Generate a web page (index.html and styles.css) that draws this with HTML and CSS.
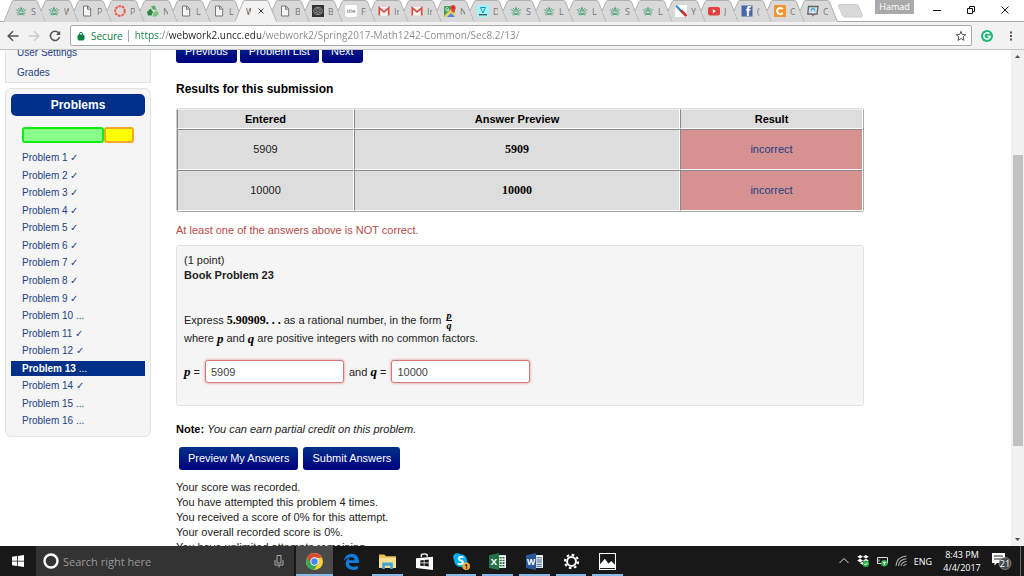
FILE: index.html
```html
<!DOCTYPE html>
<html lang="en">
	<head>
		<meta charset="UTF-8">
		<title>WeBWorK : Sec8.2 : 13</title>
		<link rel="stylesheet" href="styles.css">
	</head>
	<body>
		<svg class="defs" aria-hidden="true">
			<symbol id="tab" viewBox="0 0 43 22">
				<path class="tab-fill" d="M9 22L4 11L8 2Q8.500 .5 10 .5H31Q33 .5 33.500 2L42 22Z"/>
				<path class="tab-line" d="M4 11L8 2Q8.500 .5 10 .5H31Q33 .5 33.500 2L40.500 20Q41 21.500 43 21.500"/>
			</symbol>
			<symbol id="tab-full" viewBox="0 0 43 22">
				<path class="tab-fill" d="M0 22L8 2Q8.500 .5 10 .5H31Q33 .5 33.500 2L42 22Z"/>
				<path class="tab-line" d="M0 21.500L8 2Q8.500 .5 10 .5H31Q33 .5 33.500 2L41.500 21.500"/>
			</symbol>
			<symbol id="crown" viewBox="0 0 12 12">
				<path d="M6 1.500L7 3.500L6 7L5 3.500Z" fill="#4a9f75"/>
				<path d="M3 3Q4.800 4.500 5.200 7M9 3Q7.200 4.500 6.800 7M.8 4.800Q3.200 4.800 4.400 7.400M11.200 4.800Q8.800 4.800 7.600 7.400M1.500 8Q3 7.500 4.500 8.500H7.500Q9 7.500 10.500 8M2.500 10Q6 8.800 9.500 10" fill="none" stroke="#4a9f75" stroke-width=".9"/>
			</symbol>
			<symbol id="doc" viewBox="0 0 12 12">
				<path d="M2.500 1H7L9.700 3.700V11H2.500ZM6.500 1V4.200H9.700" fill="#f4f4f4" stroke="#777" stroke-width="1"/>
			</symbol>
			<symbol id="ring" viewBox="0 0 12 12">
				<circle cx="6" cy="6" r="4.800" fill="none" stroke="#ee5a4f" stroke-width="2" stroke-dasharray="2.600 .8"/>
			</symbol>
			<symbol id="leaf" viewBox="0 0 12 12">
				<path d="M4 1L8 .8L9.500 5L6 4.500Z" fill="#56b35d"/>
				<path d="M0 7L3.500 3.500L6 7L4.500 10.500H1Z" fill="#2b8a3e"/>
				<path d="M6.500 7.500L10 5.500L12 9L9 11.500H5.500Z" fill="#7cc47f"/>
			</symbol>
			<symbol id="coil" viewBox="0 0 12 12">
				<rect width="12" height="12" fill="#333"/>
				<g fill="none" stroke="#aaa" stroke-width=".8"><ellipse cx="6" cy="6" rx="4.300" ry="3.600"/><ellipse cx="6" cy="5" rx="2.500" ry="1.300"/><path d="M2.500 7Q6 9.500 9.500 7"/></g>
			</symbol>
			<symbol id="gmail" viewBox="0 0 12 12">
				<rect x=".5" y="2" width="11" height="8.500" fill="#f5f5f5"/>
				<path d="M1.300 10.500V2.800L6 6.800L10.700 2.800V10.500" fill="none" stroke="#dc4b3e" stroke-width="1.700"/>
			</symbol>
			<symbol id="maps" viewBox="0 0 12 12">
				<rect y="1" width="11" height="11" rx="1" fill="#3f9f57"/>
				<path d="M0 11L7 4L11 8V12H1Z" fill="#f0d060"/>
				<path d="M3 12L7 8L11 12Z" fill="#4e86ea"/>
				<path d="M9 8Q6 4.500 6.300 2.700A2.700 2.700 0 0 1 11.700 2.700Q12 4.500 9 8Z" fill="#e2483d"/>
				<circle cx="9" cy="2.800" r="1" fill="#8c2b22"/>
				<path d="M4.500 3.300A1.600 1.600 0 1 0 4.800 4.500H3.300" fill="none" stroke="#fff" stroke-width=".8"/>
			</symbol>
			<symbol id="funnel" viewBox="0 0 12 12">
				<rect width="12" height="12" fill="#9ff6fa"/>
				<path d="M3.500 2.500H8.500L6 8Z" fill="none" stroke="#2a93a8"/>
				<path d="M2 9.800H10" stroke="#222"/>
			</symbol>
			<symbol id="pens" viewBox="0 0 12 12">
				<rect width="12" height="12" fill="#fff"/>
				<path d="M1 .5L6 6" stroke="#3a8cc9" stroke-width="2.200"/>
				<path d="M6 5.500L11.500 11" stroke="#ce3434" stroke-width="2.800"/>
				<path d="M5 4.500L7.500 7" stroke="#333" stroke-width="1"/>
			</symbol>
			<symbol id="youtube" viewBox="0 0 12 12">
				<rect y="2" width="12" height="8.500" rx="2" fill="#e0413f"/>
				<path d="M4.800 4.200L8 6.200L4.800 8.200Z" fill="#fff"/>
			</symbol>
			<symbol id="chegg" viewBox="0 0 12 12">
				<rect width="12" height="12" rx="1" fill="#f7932e"/>
				<path d="M8.700 4.200A3.100 3.100 0 1 0 8.700 7.900" fill="none" stroke="#fff" stroke-width="2"/>
			</symbol>
			<symbol id="desk" viewBox="0 0 12 12">
				<path d="M1.500 1.500H11L10 9H7L6 10.500L5 9H.8Z" fill="#cfe1ea" stroke="#666" stroke-width="1.300"/>
				<circle cx="6" cy="5" r="2.300" fill="#62aed0"/>
				<path d="M4.500 8L6 5L7.500 8" stroke="#fff" fill="none"/>
			</symbol>
		</svg>

		<header class="browser">
			<div class="titlebar">
				<nav class="tabs" aria-label="Tabs">
					<button class="tab"><svg class="shape"><use href="#tab-full"/></svg><svg class="fav"><use href="#crown"/></svg><span>S</span></button>
					<button class="tab"><svg class="shape"><use href="#tab"/></svg><svg class="fav"><use href="#crown"/></svg><span>W</span></button>
					<button class="tab"><svg class="shape"><use href="#tab"/></svg><svg class="fav"><use href="#doc"/></svg><span>P</span></button>
					<button class="tab"><svg class="shape"><use href="#tab"/></svg><svg class="fav"><use href="#ring"/></svg><span>P</span></button>
					<button class="tab"><svg class="shape"><use href="#tab"/></svg><svg class="fav"><use href="#leaf"/></svg><span>N</span></button>
					<button class="tab"><svg class="shape"><use href="#tab"/></svg><svg class="fav"><use href="#doc"/></svg><span>L</span></button>
					<button class="tab"><svg class="shape"><use href="#tab"/></svg><svg class="fav"><use href="#doc"/></svg><span>L</span></button>
					<button class="tab active"><svg class="shape"><use href="#tab-full"/></svg><span>W</span><svg class="close" viewBox="0 0 8 8"><path d="M1.500 1.500L6.500 6.500M6.500 1.500L1.500 6.500"/></svg></button>
					<button class="tab"><svg class="shape"><use href="#tab"/></svg><svg class="fav"><use href="#doc"/></svg><span>B</span></button>
					<button class="tab"><svg class="shape"><use href="#tab"/></svg><svg class="fav"><use href="#coil"/></svg><span>B</span></button>
					<button class="tab"><svg class="shape"><use href="#tab"/></svg><svg class="fav" viewBox="0 0 12 12"><rect width="12" height="12" rx="2" fill="#fff"/><text x="6" y="8" font-size="6" text-anchor="middle" fill="#555" stroke="none">tile</text></svg><span>F</span></button>
					<button class="tab"><svg class="shape"><use href="#tab"/></svg><svg class="fav"><use href="#gmail"/></svg><span>In</span></button>
					<button class="tab"><svg class="shape"><use href="#tab"/></svg><svg class="fav"><use href="#gmail"/></svg><span>In</span></button>
					<button class="tab"><svg class="shape"><use href="#tab"/></svg><svg class="fav"><use href="#maps"/></svg><span>N</span></button>
					<button class="tab"><svg class="shape"><use href="#tab"/></svg><svg class="fav"><use href="#funnel"/></svg><span>D</span></button>
					<button class="tab"><svg class="shape"><use href="#tab"/></svg><svg class="fav"><use href="#crown"/></svg><span>S</span></button>
					<button class="tab"><svg class="shape"><use href="#tab"/></svg><svg class="fav"><use href="#crown"/></svg><span>L</span></button>
					<button class="tab"><svg class="shape"><use href="#tab"/></svg><svg class="fav"><use href="#crown"/></svg><span>L</span></button>
					<button class="tab"><svg class="shape"><use href="#tab"/></svg><svg class="fav"><use href="#crown"/></svg><span>S</span></button>
					<button class="tab"><svg class="shape"><use href="#tab"/></svg><svg class="fav"><use href="#crown"/></svg><span>L</span></button>
					<button class="tab"><svg class="shape"><use href="#tab"/></svg><svg class="fav"><use href="#pens"/></svg><span>Y</span></button>
					<button class="tab"><svg class="shape"><use href="#tab"/></svg><svg class="fav"><use href="#youtube"/></svg><span>J</span></button>
					<button class="tab"><svg class="shape"><use href="#tab"/></svg><svg class="fav" viewBox="0 0 12 12"><rect x=".5" y=".5" width="11" height="11" fill="#4a66a5"/><text x="7" y="11" font-size="12" font-weight="bold" text-anchor="middle" fill="#fff">f</text></svg><span>(</span></button>
					<button class="tab"><svg class="shape"><use href="#tab"/></svg><svg class="fav"><use href="#chegg"/></svg><span>C</span></button>
					<button class="tab"><svg class="shape"><use href="#tab"/></svg><svg class="fav"><use href="#desk"/></svg><span>C</span></button>
					<button class="newtab" aria-label="New tab"><svg viewBox="0 0 28 14"><path d="M3 .5H19.500Q21 .5 21.500 2L25.500 11.500Q26 13 24.500 13H8Q6.500 13 6 12L1.500 2Q1 .5 3 .5Z"/></svg></button>
				</nav>
				<button class="user">Hamad</button>
				<div class="winbtns">
					<button aria-label="Minimize"><svg viewBox="0 0 10 10"><path d="M1 5.500H9"/></svg></button>
					<button aria-label="Restore"><svg viewBox="0 0 10 10"><path d="M1.500 3.500H6.500V8.500H1.500ZM3.500 3V1.500H8.500V6.500H7"/></svg></button>
					<button aria-label="Close"><svg viewBox="0 0 10 10"><path d="M1.500 1.500L8.500 8.500M8.500 1.500L1.500 8.500"/></svg></button>
				</div>
			</div>
			<div class="toolbar">
				<button aria-label="Back"><svg viewBox="0 0 12 12"><path d="M11.500 6H1.500M6 1.200L1.200 6L6 10.800"/></svg></button>
				<button class="off" aria-label="Forward"><svg viewBox="0 0 12 12"><path d="M.5 6H10.500M6 1.200L10.800 6L6 10.800"/></svg></button>
				<button aria-label="Reload"><svg viewBox="0 0 12 12"><path d="M9.600 3A4.600 4.600 0 1 0 10.500 7"/><path class="solid" d="M11.200 .8V5H7Z"/></svg></button>
				<div class="address">
					<svg class="lock" viewBox="0 0 8 10"><rect x="1" y="4" width="6" height="5" rx="1"/><path d="M2.500 4V2.800A1.500 1.500 0 0 1 5.500 2.800V4"/></svg>
					<label for="url">Secure</label>
					<input id="url" type="text" value="https://webwork2.uncc.edu/webwork2/Spring2017-Math1242-Common/Sec8.2/13/">
					<button aria-label="Bookmark"><svg viewBox="0 0 12 12"><path class="star" d="M6 1.300L7.300 4.500L10.800 4.700L8.100 6.900L9 10.400L6 8.500L3 10.400L3.900 6.900L1.200 4.700L4.700 4.500Z"/></svg></button>
				</div>
				<button aria-label="Grammarly"><svg viewBox="0 0 12 12"><circle cx="6" cy="6" r="6" fill="#1fb677" stroke="none"/><path class="white" d="M8.500 3.800A3.200 3.200 0 1 0 9.200 6.300H6.500"/></svg></button>
				<button aria-label="Menu"><svg viewBox="0 0 12 12"><path class="solid" d="M5 1.500h2v2H5zM5 5h2v2H5zM5 8.500h2v2H5z"/></svg></button>
			</div>
		</header>

		<div class="viewport">
			<div class="page">
				<aside class="side">
					<div class="panel account">
						<a href="#">User Settings</a>
						<a href="#">Grades</a>
					</div>
					<div class="panel problems">
						<h2>Problems</h2>
						<div class="progress"><span class="done"></span><span class="open"></span></div>
						<ul>
							<li><a href="#">Problem 1 ✓</a></li>
							<li><a href="#">Problem 2 ✓</a></li>
							<li><a href="#">Problem 3 ✓</a></li>
							<li><a href="#">Problem 4 ✓</a></li>
							<li><a href="#">Problem 5 ✓</a></li>
							<li><a href="#">Problem 6 ✓</a></li>
							<li><a href="#">Problem 7 ✓</a></li>
							<li><a href="#">Problem 8 ✓</a></li>
							<li><a href="#">Problem 9 ✓</a></li>
							<li><a href="#">Problem 10 ...</a></li>
							<li><a href="#">Problem 11 ✓</a></li>
							<li><a href="#">Problem 12 ✓</a></li>
							<li class="current"><a href="#"><b>Problem 13</b> ...</a></li>
							<li><a href="#">Problem 14 ✓</a></li>
							<li><a href="#">Problem 15 ...</a></li>
							<li><a href="#">Problem 16 ...</a></li>
						</ul>
					</div>
				</aside>
				<main class="main">
					<div class="nav">
						<a class="btn" href="#">Previous</a>
						<a class="btn" href="#">Problem List</a>
						<a class="btn" href="#">Next</a>
					</div>
					<h3>Results for this submission</h3>
					<table class="results">
						<tr><th class="entered">Entered</th><th>Answer Preview</th><th class="result">Result</th></tr>
						<tr><td>5909</td><td class="math">5909</td><td class="wrong"><a href="#">incorrect</a></td></tr>
						<tr><td>10000</td><td class="math">10000</td><td class="wrong"><a href="#">incorrect</a></td></tr>
					</table>
					<p class="error">At least one of the answers above is NOT correct.</p>
					<form>
						<div class="problem">
							<p>(1 point)<br><b>Book Problem 23</b></p>
							<div class="statement">
								<p>Express <span class="math">5.90909. . .</span> as a rational number, in the form <span class="frac"><i>p</i><i>q</i></span></p>
								<p>where <i class="math">p</i> and <i class="math">q</i> are positive integers with no common factors.</p>
							</div>
							<div class="answers">
								<label for="p"><i class="math">p</i> =</label>
								<input id="p" type="text" value="5909">
								<label for="q">and <i class="math">q</i> =</label>
								<input id="q" type="text" value="10000">
							</div>
						</div>
						<p class="note"><b>Note:</b> <em>You can earn partial credit on this problem.</em></p>
						<div class="submit">
							<button type="button" class="btn">Preview My Answers</button>
							<button type="button" class="btn">Submit Answers</button>
						</div>
					</form>
					<p class="score">Your score was recorded.<br>You have attempted this problem 4 times.<br>You received a score of 0% for this attempt.<br>Your overall recorded score is 0%.<br>You have unlimited attempts remaining.</p>
				</main>
			</div>
			<div class="scrollbar">
				<svg viewBox="0 0 13 13"><path d="M4 8L6.500 5L9 8Z"/></svg>
				<div class="track"><div class="thumb"></div></div>
				<svg viewBox="0 0 13 13"><path d="M4 5L6.500 8L9 5Z"/></svg>
			</div>
		</div>

		<footer class="taskbar">
			<button class="start" aria-label="Start"><svg viewBox="0 0 12 12"><path d="M0 1.800L5 1V5.700H0ZM5.800 .9L12 0V5.700H5.800ZM0 6.400H5V11L0 10.300ZM5.800 6.400H12V12L5.800 11.100Z" fill="#fff"/></svg></button>
			<div class="search">
				<svg viewBox="0 0 16 16"><circle cx="8" cy="8" r="6.500" fill="none" stroke="#fff" stroke-width="2.400"/></svg>
				<input type="text" placeholder="Search right here" aria-label="Search">
				<svg class="mic" viewBox="0 0 12 14"><path d="M4 1.500H8V9H4ZM2 6V11H10V6M6 11V13.500" fill="none" stroke="#aaa"/></svg>
			</div>
			<div class="apps">
				<button class="app running focus" aria-label="Chrome"><svg viewBox="0 0 16 16"><circle cx="8" cy="8" r="8" fill="#f9cf3a"/><path d="M8 8L1.100 4A8 8 0 0 0 7.500 16L11.500 10Z" fill="#36a853"/><path d="M1.100 4A8 8 0 0 1 14.900 4.400H8L4.600 10Z" fill="#dc4437"/><circle cx="8" cy="8" r="3.900" fill="#fff"/><circle cx="8" cy="8" r="3" fill="#4285f4"/></svg></button>
				<button class="app" aria-label="Edge"><svg viewBox="0 0 16 16"><path d="M1 7Q2 .8 8.300 .7Q14.800 1 15 8V9.500H5.500Q6 13 10 13Q12.300 13 14 12V15Q12 16 9 16Q2.500 15.600 2.500 9.500Q3 5.800 6.500 4.500Q5.500 5.500 5.500 6.800H10.800Q10.700 3.900 7.800 3.900Q3.500 4 1 7Z" fill="#0f7bdb"/></svg></button>
				<button class="app running" aria-label="File Explorer"><svg viewBox="0 0 16 16"><path d="M0 1.500H5L6.500 3H16V14H0Z" fill="#e9bd51"/><path d="M0 4.500H16V14H0Z" fill="#fbe18f"/><path d="M3 15V9H13V15H10.500V12H5.500V15Z" fill="#3fa4dc"/></svg></button>
				<button class="app" aria-label="Store"><svg viewBox="0 0 16 16"><path d="M0 5L16 3.500V16L0 14Z" fill="#fff"/><path d="M5 4V1.500Q8 0 10.500 1.500V3.500" fill="none" stroke="#fff" stroke-width="1.200"/><path d="M4 7L7.300 6.700V9H4ZM8 6.600L12 6.200V9H8ZM4 9.700H7.300V12.200L4 11.900ZM8 9.700H12V12.600L8 12.200Z" fill="#181818"/></svg></button>
				<button class="app running" aria-label="Skype"><svg viewBox="0 0 18 18"><circle cx="8" cy="8" r="6.800" fill="#00aff0"/><circle cx="4.500" cy="4.500" r="4.200" fill="#00aff0"/><circle cx="11.500" cy="11.500" r="4.200" fill="#00aff0"/><text x="8" y="12.500" font-size="13" font-weight="bold" text-anchor="middle" fill="#fff">S</text><circle cx="14" cy="14" r="4" fill="#fbb034"/><text x="14" y="16.500" font-size="7" font-weight="bold" text-anchor="middle" fill="#222">1</text></svg></button>
				<button class="app running" aria-label="Excel"><svg viewBox="0 0 16 16"><rect x="8" y="2" width="8" height="12" fill="#fff"/><path d="M10 4.500H15M10 7H15M10 9.500H15M10 12H15" stroke="#217346" stroke-width="1.500" stroke-dasharray="2 .6"/><path d="M0 2L9.500 0V16L0 14Z" fill="#217346"/><text x="4.700" y="11.500" font-size="9" font-weight="bold" text-anchor="middle" fill="#fff">X</text></svg></button>
				<button class="app running" aria-label="Word"><svg viewBox="0 0 16 16"><rect x="8" y="2" width="8" height="12" fill="#fff"/><path d="M10 4.500H15M10 6.500H15M10 8.500H15M10 10.500H15M10 12.500H15" stroke="#2b579a"/><path d="M0 2L9.500 0V16L0 14Z" fill="#2b579a"/><text x="4.700" y="11" font-size="8" font-weight="bold" text-anchor="middle" fill="#fff">W</text></svg></button>
				<button class="app running" aria-label="Settings"><svg viewBox="0 0 16 16"><circle cx="8" cy="8" r="4.200" fill="none" stroke="#fff" stroke-width="1.900"/><circle cx="8" cy="8" r="6.200" fill="none" stroke="#fff" stroke-width="2" stroke-dasharray="2.435 2.435"/></svg></button>
				<button class="app running" aria-label="Photos"><svg viewBox="0 0 16 16"><path d="M.5 .5H15.500V15.500H.5Z" fill="#181818" stroke="#fff"/><path d="M1 14V10.500L5.500 5.500L9 10L11.500 7.500L15 11V14Z" fill="#fff"/></svg></button>
			</div>
			<div class="tray">
				<svg viewBox="0 0 12 12"><path d="M1.500 8L6 3.500L10.500 8" fill="none" stroke="#ddd"/></svg>
				<svg viewBox="0 0 12 12"><path d="M3.300 0L6 1.800L3 3.600L.2 1.800ZM8.700 0L11.800 1.800L9 3.600L6 1.800ZM3 3.800L6 5.600L3.300 7.400L.2 5.600ZM9 3.800L11.800 5.600L8.700 7.400L6 5.600ZM3 8.200L6 6.500L8 8L6 10Z" fill="#fff"/><circle cx="8.800" cy="8.800" r="3.200" fill="#2fb14a"/><path d="M7.300 8.800L8.500 10L10.500 7.800" fill="none" stroke="#fff"/></svg>
				<svg viewBox="0 0 12 12"><path d="M1.500 2.500H11.500V8.500H1.500ZM3 4.500V6.500" fill="none" stroke="#ddd"/><circle cx="8.300" cy="8.300" r="3.200" fill="#2fb14a"/><path d="M8.300 6.500V10M7 7.500H9.600" stroke="#fff"/></svg>
				<svg viewBox="0 0 12 12"><path d="M1 11Q1.500 2 11.500 1M3.500 11Q4 4.500 11.500 3.800M6 11Q6.500 7 11.500 6.500M8.500 11Q9 9.500 11.500 9.200" fill="none" stroke="#aaa" stroke-width="1.100"/></svg>
				<span class="lang">ENG</span>
				<div class="clock">8:43 PM<br>4/4/2017</div>
				<button class="notify" aria-label="Notifications"><svg viewBox="0 0 20 20"><path d="M0 2H13V12H5L2.500 14.500V12H0Z" fill="#fff"/><path d="M2 5H11M2 8H11" stroke="#222"/><circle cx="13" cy="12.500" r="6" fill="#4a4a4a" stroke="#999" stroke-width=".7"/><text x="13" y="15.500" font-size="9" text-anchor="middle" fill="#fff">21</text></svg></button>
			</div>
		</footer>
	</body>
</html>
```
FILE: styles.css
```css
*{
    margin: 0;
    padding: 0;
    box-sizing: border-box;
}
body{
    display: flex;
    flex-direction: column;
    height: 100vh;
    overflow: hidden;
    background: #fff;
    color: #222;
    font: 11px/15px "Liberation Sans", Arial, sans-serif;
}
a{
    color: #1c3f86;
    text-decoration: none;
}
button{
    border: 0;
    background: none;
    font: inherit;
    color: inherit;
}
input{
    font: inherit;
    outline: 0;
}
ul{
    list-style: none;
}
.defs{
    position: absolute;
    width: 0;
    height: 0;
}

/* browser */
.browser{
    flex: none;
    font-family: "Open Sans", "Noto Sans", sans-serif;
}
.titlebar{
    display: flex;
    height: 22px;
    border-bottom: 1px solid #aaa;
}
.tabs{
    display: flex;
    flex: 1;
    padding-left: 4px;
}
.tab{
    position: relative;
    display: flex;
    flex: none;
    align-items: center;
    gap: 4px;
    width: 33px;
    height: 22px;
    padding-left: 11px;
    font-size: 9px;
    color: #777;
}
.tab .shape{
    position: absolute;
    left: 0;
    top: 0;
    width: 43px;
    height: 22px;
    fill: #d9d9d9;
    stroke: #b0b0b0;
}
.tab-fill{
    stroke: none;
}
.tab-line{
    fill: none;
}
.tab .fav{
    position: relative;
    flex: none;
    width: 12px;
    height: 12px;
}
.tab span{
    position: relative;
    flex: none;
    width: 5px;
    overflow: hidden;
    text-align: left;
    white-space: nowrap;
}
.tab.active{
    z-index: 1;
    gap: 6px;
    color: #555;
}
.tab.active .shape{
    fill: #f2f2f2;
}
.tab .close{
    position: relative;
    flex: none;
    width: 8px;
    height: 8px;
    stroke: #444;
}
.newtab{
    flex: none;
    width: 28px;
    height: 22px;
    margin-left: 8px;
}
.newtab svg{
    display: block;
    width: 28px;
    height: 14px;
    fill: #d9d9d9;
    stroke: #ccc;
}
.user{
    width: 39px;
    height: 14px;
    margin-right: 2px;
    background: #aaa;
    color: #fff;
    font-size: 9px;
    line-height: 14px;
}
.winbtns{
    display: flex;
    padding: 0 2px 0 4px;
}
.winbtns button{
    width: 34px;
    height: 20px;
}
.winbtns svg{
    width: 10px;
    height: 10px;
    fill: none;
    stroke: #111;
}
.toolbar{
    display: flex;
    align-items: center;
    gap: 9px;
    height: 28px;
    padding: 0 7px;
    background: #f2f2f2;
    border-bottom: 1px solid #c4c4c4;
}
.toolbar button{
    flex: none;
    width: 12px;
    height: 12px;
}
.toolbar svg{
    display: block;
    width: 12px;
    height: 12px;
    fill: none;
    stroke: #555;
    stroke-width: 1.5;
}
.toolbar .off svg{
    stroke: #ccc;
}
.toolbar .solid{
    fill: #555;
    stroke: none;
}
.toolbar .white{
    stroke: #fff;
}
.toolbar .star{
    stroke-width: 1;
}
.toolbar button:last-child{
    margin-left: 3px;
}
.toolbar .address button{
    margin-left: 0;
}
.address{
    display: flex;
    flex: 1;
    align-items: center;
    height: 21px;
    padding: 0 4px 0 6px;
    background: #fff;
    border: 1px solid #aaa;
    border-radius: 2px;
}
.toolbar .lock{
    width: 8px;
    height: 10px;
    stroke: #0b8043;
    stroke-width: 1;
}
.lock rect{
    fill: #0b8043;
}
.address label{
    margin: 0 6px;
    padding-right: 5px;
    border-right: 1px solid #aaa;
    color: #0b8043;
    font-size: 10px;
    line-height: 12px;
}
.address input{
    flex: 1;
    min-width: 0;
    border: 0;
    background: linear-gradient(to right, #0b8043 25px, #888 25px, #888 34px, #222 34px, #222 126px, #888 126px);
    -webkit-background-clip: text;
    background-clip: text;
    color: transparent;
    font-size: 10px;
}

/* page */
.viewport{
    display: flex;
    flex: 1;
    min-height: 0;
}
.page{
    display: grid;
    grid-template-columns: 146px minmax(0, 1fr) 122px;
    gap: 25px;
    flex: 1;
    align-items: start;
    padding-left: 5px;
    overflow: hidden;
}
.side{
    margin-top: -7px;
    font-size: 10px;
}
.panel{
    background: #f5f5f5;
    border: 1px solid #e3e3e3;
    border-radius: 6px;
}
.account{
    display: grid;
    height: 40px;
    padding-left: 11px;
    border-top: 0;
    border-radius: 0;
    line-height: 19px;
}
.problems{
    margin-top: 5px;
    padding: 5px 5px 6px;
}
.problems h2{
    height: 22px;
    background: #003087;
    border-radius: 5px;
    color: #fff;
    font-size: 12px;
    line-height: 22px;
    text-align: center;
}
.progress{
    display: flex;
    height: 16px;
    margin: 11px 11px 6px;
}
.progress span{
    border: 2px solid;
    border-radius: 3px;
}
.progress .done{
    flex: 3;
    background: #8f8;
    border-color: #1e1;
}
.progress .open{
    flex: 1;
    background: #ff0;
    border-color: #f5a623;
}
.problems ul{
    display: grid;
    grid-auto-rows: 1fr;
    height: 281px;
}
.problems li{
    padding-left: 11px;
    line-height: 17px;
}
.problems .current{
    height: 15px;
    margin-top: 1px;
    background: #003087;
    line-height: 15px;
}
.current a{
    color: #fff;
}
.nav{
    display: flex;
    gap: 3px;
    margin-top: -10px;
}
.btn{
    height: 23px;
    padding: 0 9px;
    background: linear-gradient(#003087, #000080);
    border-radius: 3px;
    color: #fff;
    line-height: 23px;
}
.main h3{
    margin: 16px 0 9px;
    color: #000;
    font-size: 12px;
    line-height: 20px;
}
.results{
    width: 100%;
    border: 1px solid;
    border-color: #ddd #aaa #aaa #ccc;
    border-radius: 3px;
    border-spacing: 0;
    background: #ddd;
    text-align: center;
}
.results th, .results td{
    height: 41px;
    border: 1px solid;
    border-color: #888 #fff #fff #888;
}
.results th{
    height: 20px;
    border-top-color: #eee;
    color: #000;
}
.entered{
    width: 177px;
}
.result{
    width: 183px;
}
.results .wrong{
    background: #d69191;
}
.math{
    color: #000;
    font: 13px/15px "Liberation Serif", "Times New Roman", serif;
}
td.math, span.math{
    font-weight: bold;
    font-size: 12px;
}
i.math, .frac{
    font-style: italic;
    font-weight: bold;
}
.error{
    margin: 11px 0 7px;
    color: #b94a48;
}
.problem{
    padding: 7px 7px 22px;
    background: #f5f5f5;
    border: 1px solid #e3e3e3;
    border-radius: 3px;
}
.statement{
    margin-top: 28px;
}
.statement p{
    display: flex;
    align-items: center;
    gap: 3px;
    height: 18px;
}
.frac{
    display: inline-grid;
    margin-left: 2px;
    color: #000;
    font: italic bold 10px/9px "Liberation Serif", serif;
}
.frac i + i{
    border-top: 1px solid #000;
}
.answers{
    display: flex;
    align-items: center;
    gap: 5px;
    margin-top: 13px;
}
.answers input{
    width: 139px;
    height: 23px;
    padding: 0 5px;
    border: 1px solid #d4787a;
    border-radius: 3px;
    box-shadow: 0 0 3px #e08a8a;
    color: #444;
}
.note{
    margin: 16px 0 10px;
}
.note b{
    color: #000;
}
.submit{
    display: flex;
    gap: 5px;
    margin: 0 3px 10px;
}
.scrollbar{
    display: flex;
    flex: none;
    flex-direction: column;
    width: 13px;
    background: #f1f1f1;
    fill: #505050;
}
.scrollbar svg{
    width: 13px;
    height: 13px;
}
.track{
    display: grid;
    grid-template-rows: 92fr 291fr 87fr;
    flex: 1;
    padding: 0 1px 0 2px;
}
.thumb{
    grid-row: 2;
    background: #c1c1c1;
}

/* taskbar */
.taskbar{
    display: flex;
    flex: none;
    height: 30px;
    background: #181818;
    color: #fff;
    font-family: "Open Sans", "Noto Sans", sans-serif;
}
.taskbar svg{
    display: block;
    margin: auto;
}
.start{
    width: 36px;
}
.start svg{
    width: 12px;
    height: 12px;
}
.search{
    display: flex;
    align-items: center;
    gap: 4px;
    width: 258px;
    padding: 0 9px 0 7px;
    background: #333;
}
.search svg{
    width: 16px;
    height: 16px;
}
.search .mic{
    width: 12px;
    height: 14px;
}
.search input{
    flex: 1;
    min-width: 0;
    border: 0;
    background: none;
    color: #fff;
}
.search input::placeholder{
    color: #999;
}
.apps{
    display: flex;
    width: 330px;
    margin-left: 2px;
}
.app{
    display: flex;
    flex: 1;
    position: relative;
}
.app svg{
    width: 17px;
    height: 17px;
}
.app.focus{
    background: #4a4a4a;
}
.running::after{
    content: "";
    position: absolute;
    left: 3px;
    right: 3px;
    bottom: 0;
    height: 2px;
    background: #85b9e6;
}
.focus::after{
    left: 0;
    right: 0;
}
.tray{
    display: flex;
    align-items: center;
    gap: 7px;
    margin-left: auto;
    padding-right: 3px;
    font-size: 9px;
}
.tray svg{
    width: 12px;
    height: 12px;
}
.clock{
    width: 46px;
    line-height: 13px;
    text-align: center;
}
.tray .notify{
    height: 30px;
    padding-right: 8px;
    border-right: 1px solid #666;
}
.tray .notify svg{
    width: 20px;
    height: 20px;
}
```
